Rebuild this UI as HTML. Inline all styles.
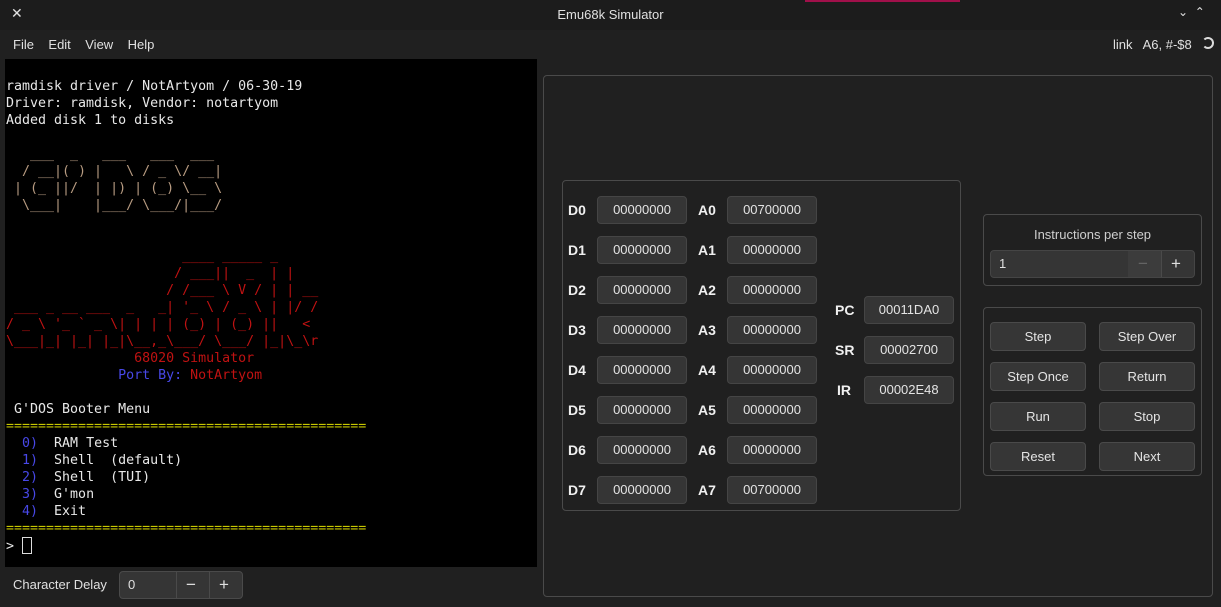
<!DOCTYPE html>
<html><head><meta charset="utf-8"><style>
*{box-sizing:border-box;margin:0;padding:0}
body{width:1221px;height:607px;background:#202020;color:#e0e0e0;font-family:"Liberation Sans","DejaVu Sans",sans-serif;font-size:13px;position:relative;overflow:hidden}
.a{position:absolute}
.term{left:5px;top:59px;width:532px;height:508px;background:#000}
pre{position:absolute;left:6px;top:78px;font-family:"DejaVu Sans Mono","Liberation Mono",monospace;font-size:13.3px;line-height:17px;color:#e8e8e8;white-space:pre}
.g{color:#b89c82}.r{color:#c01212}.b{color:#4848e8}.y{color:#c8c800}
.box{border:1px solid #4a4a4a;border-radius:4px}
.f{background:#353535;border:1px solid #454545;border-radius:4px;text-align:center;line-height:26px;height:28px;font-size:13px;color:#e4e4e4}
.lbl{font-weight:bold;font-size:14px;color:#f0f0f0}
.btn{background:#363636;border:1px solid #4a4a4a;border-radius:4px;width:96px;height:29px;text-align:center;line-height:27px;color:#e4e4e4}
</style></head><body>
<div class="a" style="left:0;top:0;width:1221px;height:30px;background:#1c1c1c"></div>
<div class="a" style="left:805px;top:0;width:155px;height:2px;background:#a0104a"></div>
<div class="a" style="left:11px;top:5px;font-size:14px">✕</div>
<div class="a" style="left:0;width:1221px;top:7px;text-align:center;font-size:13px">Emu68k Simulator</div>
<div class="a" style="left:1178px;top:5px;font-size:12px">⌄ &nbsp;⌃</div>
<div class="a" style="left:13px;top:37px">File&nbsp;&nbsp;&nbsp; Edit&nbsp;&nbsp;&nbsp; View&nbsp;&nbsp;&nbsp; Help</div>
<div class="a" style="left:1113px;top:37px">link&nbsp;&nbsp; A6, #-$8</div>
<div class="a" style="left:1202px;top:37px;width:12px;height:12px;border:2px solid #ddd;border-left-color:transparent;border-radius:50%"></div>
<div class="a term"></div>
<pre>ramdisk driver / NotArtyom / 06-30-19
Driver: ramdisk, Vendor: notartyom
Added disk 1 to disks

<span class="g">   ___  _   ___   ___  ___
  / __|( ) |   \ / _ \/ __|
 | (_ ||/  | |) | (_) \__ \
  \___|    |___/ \___/|___/</span>


<span class="r">                      ____ _____ _
                     / ___||  _  | |
                    / /___ \ V / | | __
 ___ _ __ ___  _   _| '_ \ / _ \ | |/ /
/ _ \ '_ ` _ \| | | | (_) | (_) ||   &lt;
\___|_| |_| |_|\__,_\___/ \___/ |_|\_\r
                68020 Simulator</span>
              <span class="b">Port By:</span> <span class="r">NotArtyom</span>

 G'DOS Booter Menu
<span class="y">=============================================</span>
  <span class="b">0)</span>  RAM Test
  <span class="b">1)</span>  Shell  (default)
  <span class="b">2)</span>  Shell  (TUI)
  <span class="b">3)</span>  G'mon
  <span class="b">4)</span>  Exit
<span class="y">=============================================</span>
&gt; <span style="display:inline-block;width:10px;height:17px;border:1px solid #ddd;vertical-align:-4px"></span></pre>
<div class="a" style="left:13px;top:577px">Character Delay</div>
<div class="a" style="left:119px;top:571px;width:124px;height:28px;background:#353535;border:1px solid #4a4a4a;border-radius:4px"></div>
<div class="a" style="left:128px;top:577px">0</div>
<div class="a" style="left:176px;top:572px;width:1px;height:26px;background:#4a4a4a"></div>
<div class="a" style="left:209px;top:572px;width:1px;height:26px;background:#4a4a4a"></div>
<div class="a" style="left:186px;top:575px;font-size:17px">−</div>
<div class="a" style="left:219px;top:575px;font-size:17px">+</div>

<div class="a box" style="left:543px;top:75px;width:670px;height:522px"></div>
<div class="a box" style="left:562px;top:180px;width:399px;height:331px"></div>
<div class="a lbl" style="left:568px;top:202px">D0</div><div class="a f" style="left:597px;top:196px;width:90px">00000000</div>
<div class="a lbl" style="left:698px;top:202px">A0</div><div class="a f" style="left:727px;top:196px;width:90px">00700000</div>
<div class="a lbl" style="left:568px;top:242px">D1</div><div class="a f" style="left:597px;top:236px;width:90px">00000000</div>
<div class="a lbl" style="left:698px;top:242px">A1</div><div class="a f" style="left:727px;top:236px;width:90px">00000000</div>
<div class="a lbl" style="left:568px;top:282px">D2</div><div class="a f" style="left:597px;top:276px;width:90px">00000000</div>
<div class="a lbl" style="left:698px;top:282px">A2</div><div class="a f" style="left:727px;top:276px;width:90px">00000000</div>
<div class="a lbl" style="left:568px;top:322px">D3</div><div class="a f" style="left:597px;top:316px;width:90px">00000000</div>
<div class="a lbl" style="left:698px;top:322px">A3</div><div class="a f" style="left:727px;top:316px;width:90px">00000000</div>
<div class="a lbl" style="left:568px;top:362px">D4</div><div class="a f" style="left:597px;top:356px;width:90px">00000000</div>
<div class="a lbl" style="left:698px;top:362px">A4</div><div class="a f" style="left:727px;top:356px;width:90px">00000000</div>
<div class="a lbl" style="left:568px;top:402px">D5</div><div class="a f" style="left:597px;top:396px;width:90px">00000000</div>
<div class="a lbl" style="left:698px;top:402px">A5</div><div class="a f" style="left:727px;top:396px;width:90px">00000000</div>
<div class="a lbl" style="left:568px;top:442px">D6</div><div class="a f" style="left:597px;top:436px;width:90px">00000000</div>
<div class="a lbl" style="left:698px;top:442px">A6</div><div class="a f" style="left:727px;top:436px;width:90px">00000000</div>
<div class="a lbl" style="left:568px;top:482px">D7</div><div class="a f" style="left:597px;top:476px;width:90px">00000000</div>
<div class="a lbl" style="left:698px;top:482px">A7</div><div class="a f" style="left:727px;top:476px;width:90px">00700000</div>
<div class="a lbl" style="left:835px;top:302px">PC</div><div class="a f" style="left:864px;top:296px;width:90px">00011DA0</div>
<div class="a lbl" style="left:835px;top:342px">SR</div><div class="a f" style="left:864px;top:336px;width:90px">00002700</div>
<div class="a lbl" style="left:837px;top:382px">IR</div><div class="a f" style="left:864px;top:376px;width:90px">00002E48</div>

<div class="a box" style="left:983px;top:214px;width:219px;height:72px"></div>
<div class="a" style="left:983px;width:219px;top:227px;text-align:center;color:#cfcfcf">Instructions per step</div>
<div class="a" style="left:990px;top:250px;width:205px;height:28px;background:#353535;border:1px solid #454545;border-radius:4px"></div>
<div class="a" style="left:1128px;top:251px;width:33px;height:26px;background:#3c3c3c"></div>
<div class="a" style="left:1161px;top:251px;width:1px;height:26px;background:#4a4a4a"></div>
<div class="a" style="left:999px;top:256px">1</div>
<div class="a" style="left:1138px;top:254px;font-size:17px;color:#666">−</div>
<div class="a" style="left:1171px;top:254px;font-size:17px">+</div>

<div class="a box" style="left:983px;top:307px;width:219px;height:169px"></div>
<div class="a btn" style="left:990px;top:322px">Step</div>
<div class="a btn" style="left:1099px;top:322px">Step Over</div>
<div class="a btn" style="left:990px;top:362px">Step Once</div>
<div class="a btn" style="left:1099px;top:362px">Return</div>
<div class="a btn" style="left:990px;top:402px">Run</div>
<div class="a btn" style="left:1099px;top:402px">Stop</div>
<div class="a btn" style="left:990px;top:442px">Reset</div>
<div class="a btn" style="left:1099px;top:442px">Next</div>
</body></html>
